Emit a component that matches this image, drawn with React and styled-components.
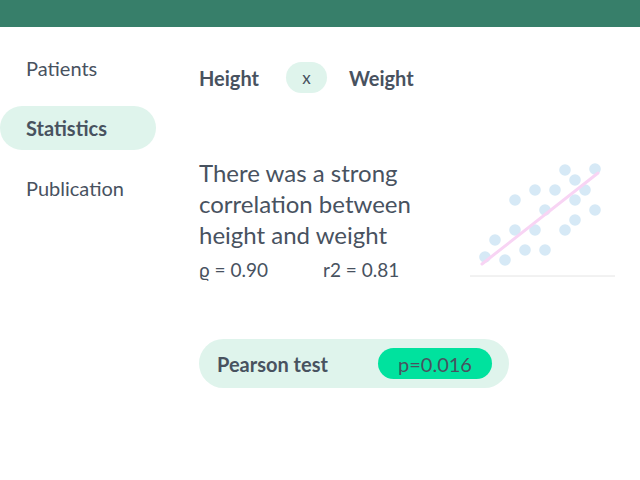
import React from 'react'
import styled, { createGlobalStyle } from 'styled-components'

const GlobalStyle = createGlobalStyle`
  body {
    margin: 0;
    background: #fff;
    font-family: Lato, "Open Sans", sans-serif;
    color: #48525f;
  }
`

const dots = [
  [565, 170], [595, 169], [575, 180], [535, 190], [555, 190], [585, 190],
  [515, 200], [575, 200], [545, 210], [595, 210], [575, 220], [515, 230],
  [535, 230], [565, 230], [495, 240], [525, 250], [545, 250], [485, 257], [505, 260],
]

export default function App() {
  return (
    <>
      <GlobalStyle />
      <TopBar />
      <Layout>
        <Sidebar>
          <NavItem>Patients</NavItem>
          <NavItem active>Statistics</NavItem>
          <NavItem>Publication</NavItem>
        </Sidebar>
        <Main>
          <VarRow>
            <VarName>Height</VarName>
            <Times>x</Times>
            <VarName>Weight</VarName>
          </VarRow>
          <ResultRow>
            <Summary>
              <Sentence>There was a strong correlation between height and weight</Sentence>
              <Stats>
                <Stat>ϱ = 0.90</Stat>
                <Stat>r2 = 0.81</Stat>
              </Stats>
            </Summary>
            <Chart width="170" height="140" viewBox="460 150 170 140">
              {dots.map(([x, y], i) => (
                <circle key={i} cx={x} cy={y} r="5.8" fill="#d6e9f6" />
              ))}
              <line x1="482" y1="264" x2="598" y2="173" stroke="#f8d4f4" strokeWidth="3" strokeLinecap="round" />
              <line x1="470" y1="276" x2="615" y2="276" stroke="#e4e4e4" strokeWidth="1" />
            </Chart>
          </ResultRow>
          <TestPill>
            <TestName>Pearson test</TestName>
            <PValue>p=0.016</PValue>
          </TestPill>
        </Main>
      </Layout>
    </>
  )
}

const TopBar = styled.div`
  height: 27px;
  background: #377f6a;
`
const Layout = styled.div`
  display: flex;
`
const Sidebar = styled.nav`
  width: 156px;
  padding-top: 19px;
  display: flex;
  flex-direction: column;
  gap: 16px;
`
const NavItem = styled.div`
  height: 44px;
  display: flex;
  align-items: center;
  padding-left: 26px;
  font-size: 20px;
  font-weight: ${p => (p.active ? 700 : 400)};
  background: ${p => (p.active ? '#dff4ec' : 'transparent')};
  border-radius: 22px;
`
const Main = styled.main`
  padding-left: 43px;
  padding-top: 35px;
  display: flex;
  flex-direction: column;
`
const VarRow = styled.div`
  display: flex;
  align-items: center;
  height: 31px;
`
const VarName = styled.div`
  font-size: 20px;
  font-weight: 700;
`
const Times = styled.div`
  width: 41px;
  height: 31px;
  margin: 0 22px 0 27px;
  border-radius: 16px;
  background: #dff4ec;
  display: flex;
  align-items: center;
  justify-content: center;
  font-size: 17px;
`
const ResultRow = styled.div`
  display: flex;
  margin-top: 57px;
`
const Summary = styled.div`
  width: 226px;
  padding-top: 7px;
`
const Sentence = styled.div`
  font-size: 24px;
  line-height: 31px;
`
const Stats = styled.div`
  display: flex;
  margin-top: 9px;
  font-size: 19px;
  line-height: 22px;
  white-space: nowrap;
`
const Stat = styled.div`
  flex: 0 0 124px;
`
const Chart = styled.svg`
  display: block;
  flex-shrink: 0;
  margin-left: 35px;
`
const TestPill = styled.div`
  margin-top: 49px;
  width: 310px;
  height: 49px;
  box-sizing: border-box;
  border-radius: 25px;
  background: #dff4ec;
  display: flex;
  align-items: center;
  justify-content: space-between;
  padding: 0 17px 0 18px;
`
const TestName = styled.div`
  font-size: 20px;
  font-weight: 700;
`
const PValue = styled.div`
  width: 114px;
  height: 31px;
  border-radius: 16px;
  background: #00e29e;
  display: flex;
  align-items: center;
  justify-content: center;
  font-size: 20px;
`
